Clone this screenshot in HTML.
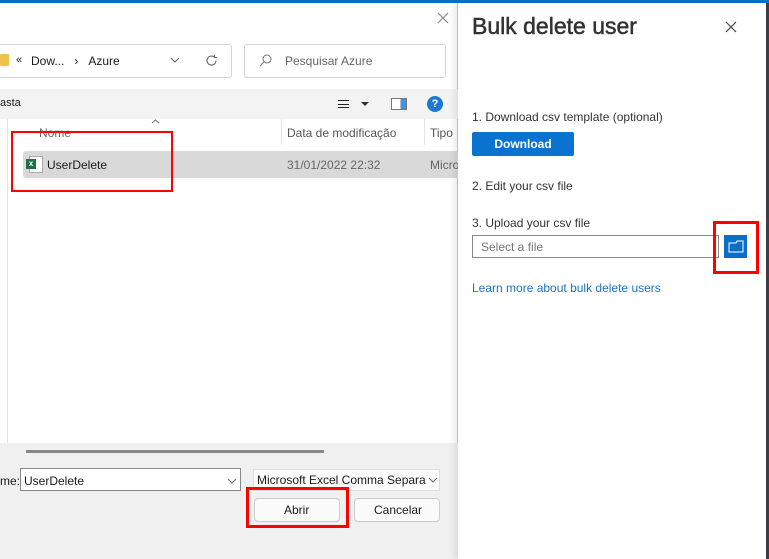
<!DOCTYPE html>
<html><head><style>
*{margin:0;padding:0;box-sizing:border-box}
body{width:769px;height:559px;position:relative;overflow:hidden;background:#f0f0f0;font-family:"Liberation Sans",sans-serif;}
.a{position:absolute}
.t{font-size:12px;color:#1a1a1a;white-space:nowrap}
</style></head><body>
<div class="a" style="left:0;top:0;width:769px;height:3px;background:#0a6fc8"></div>
<div class="a" style="left:0;top:3px;width:458px;height:532px;background:#fff;border-right:1px solid #c8c8c8;border-bottom:1px solid #c8c8c8;border-radius:0 0 6px 0"></div>
<svg class="a" style="left:437px;top:12px" width="12" height="12"><path d="M1 1L11 11M11 1L1 11" stroke="#888" stroke-width="1.2"/></svg>
<div class="a" style="left:-2px;top:44px;width:234px;height:34px;border:1px solid #d5d5d5;border-radius:3px"></div>
<div class="a" style="left:0;top:54px;width:9px;height:12px;background:#f2c14b;border-radius:1px"></div>
<div class="a t" style="left:16px;top:54px;font-size:11px">«</div>
<div class="a t" style="left:31px;top:54px">Dow...&nbsp;&nbsp;&nbsp;›&nbsp;&nbsp;&nbsp;Azure</div>
<svg class="a" style="left:170px;top:57px" width="10" height="6"><path d="M1 1L5 5L9 1" stroke="#666" fill="none"/></svg>
<svg class="a" style="left:205px;top:54px" width="13" height="13"><path d="M11 6.5A4.5 4.5 0 1 1 9.5 3.2M9.5 0.8V3.5H12" stroke="#666" fill="none" stroke-width="1.1"/></svg>
<div class="a" style="left:244px;top:44px;width:202px;height:34px;border:1px solid #d5d5d5;border-radius:3px"></div>
<svg class="a" style="left:259px;top:54px" width="13" height="13"><circle cx="8" cy="5" r="4" stroke="#777" fill="none"/><path d="M5 8L1 12" stroke="#777"/></svg>
<div class="a t" style="left:285px;top:54px;color:#666">Pesquisar Azure</div>
<div class="a" style="left:0;top:89px;width:458px;height:30px;background:#f3f3f3"></div>
<div class="a t" style="left:0;top:97px;font-size:11px">asta</div>
<div class="a" style="left:338px;top:100px;width:11px;height:8px;border-top:1px solid #222;border-bottom:1px solid #222"></div>
<div class="a" style="left:338px;top:103.5px;width:11px;height:1px;background:#222"></div>
<div class="a" style="left:361px;top:102px;border-left:4px solid transparent;border-right:4px solid transparent;border-top:4px solid #333"></div>
<div class="a" style="left:391px;top:98px;width:16px;height:12px;border:1px solid #777;background:linear-gradient(90deg,#fff 60%,#4a90d8 60%)"></div>
<div class="a" style="left:427px;top:96px;width:16px;height:16px;border-radius:50%;background:#1c7ad6;color:#fff;font-size:11px;font-weight:bold;text-align:center;line-height:16px">?</div>
<div class="a" style="left:7px;top:119px;width:1px;height:340px;background:#e4e4e4"></div>
<div class="a t" style="left:39px;top:126px;color:#666">Nome</div>
<svg class="a" style="left:151px;top:119px" width="9" height="5"><path d="M1 4L4.5 1L8 4" stroke="#666" fill="none"/></svg>
<div class="a" style="left:281px;top:119px;width:1px;height:26px;background:#e5e5e5"></div>
<div class="a" style="left:424px;top:119px;width:1px;height:26px;background:#e5e5e5"></div>
<div class="a t" style="left:287px;top:126px;color:#555">Data de modificação</div>
<div class="a t" style="left:430px;top:126px;color:#555">Tipo</div>
<div class="a" style="left:23px;top:151px;width:435px;height:27px;background:#d9d9d9;border-radius:3px 0 0 3px"></div>
<div class="a" style="left:29px;top:156px;width:14px;height:17px;border:1px solid #aaa;background:#fff"></div>
<div class="a" style="left:26px;top:159px;width:10px;height:10px;background:#1e7145;color:#fff;font-size:8px;font-weight:bold;text-align:center;line-height:10px">x</div>
<div class="a t" style="left:47px;top:158px">UserDelete</div>
<div class="a t" style="left:287px;top:158px;color:#666">31/01/2022 22:32</div>
<div class="a t" style="left:430px;top:158px;color:#666">Micro</div>
<div class="a" style="left:0;top:443px;width:458px;height:92px;background:#f0f0f0;border-radius:0 0 6px 0"></div>
<div class="a" style="left:26px;top:450px;width:298px;height:3px;background:#888"></div>
<div class="a t" style="left:0;top:474px">me:</div>
<div class="a" style="left:20px;top:468px;width:221px;height:23px;border:1px solid #888;background:#fff"></div>
<div class="a t" style="left:24px;top:474px">UserDelete</div>
<svg class="a" style="left:227px;top:478px" width="10" height="6"><path d="M1 1L5 5L9 1" stroke="#666" fill="none"/></svg>
<div class="a" style="left:253px;top:469px;width:187px;height:22px;border:1px solid #ddd;background:#fbfbfb"></div>
<div class="a t" style="left:257px;top:473px">Microsoft Excel Comma Separa</div>
<svg class="a" style="left:428px;top:477px" width="10" height="6"><path d="M1 1L5 5L9 1" stroke="#666" fill="none"/></svg>
<div class="a" style="left:254px;top:498px;width:86px;height:24px;border:1px solid #ccc;border-radius:4px;background:#fbfbfb"></div>
<div class="a t" style="left:284px;top:503px">Abrir</div>
<div class="a" style="left:354px;top:498px;width:86px;height:24px;border:1px solid #ccc;border-radius:4px;background:#fbfbfb"></div>
<div class="a t" style="left:374px;top:503px">Cancelar</div>
<div class="a" style="left:11px;top:131px;width:162px;height:61px;border:2px solid #f00"></div>
<div class="a" style="left:246px;top:487px;width:103px;height:41px;border:3px solid #f00"></div>
<div class="a" style="left:458px;top:3px;width:308px;height:556px;background:#fff;box-shadow:-4px 0 6px rgba(0,0,0,.08)"></div>
<div class="a" style="left:766px;top:3px;width:3px;height:556px;background:#3b3f45"></div>
<div class="a" style="left:472px;top:13px;font-size:23px;color:#323232;white-space:nowrap;-webkit-text-stroke:0.5px #323232">Bulk delete user</div>
<svg class="a" style="left:725px;top:21px" width="12" height="12"><path d="M1 1L11 11M11 1L1 11" stroke="#444" stroke-width="1.2"/></svg>
<div class="a t" style="left:472px;top:110px;color:#333">1. Download csv template (optional)</div>
<div class="a" style="left:472px;top:132px;width:102px;height:24px;background:#0a73d0;border-radius:2px;color:#fff;font-weight:bold;font-size:12px;text-align:center;line-height:24px">Download</div>
<div class="a t" style="left:472px;top:179px;color:#333">2. Edit your csv file</div>
<div class="a t" style="left:472px;top:216px;color:#333">3. Upload your csv file</div>
<div class="a" style="left:472px;top:235px;width:247px;height:23px;border:1px solid #888"></div>
<div class="a t" style="left:481px;top:240px;color:#777">Select a file</div>
<div class="a" style="left:724px;top:235px;width:23px;height:23px;background:#0a6fc8"></div>
<svg class="a" style="left:728px;top:240px" width="16" height="13"><path d="M1 3H8L9 1H15V12H1Z" stroke="#fff" fill="none"/></svg>
<div class="a" style="left:713px;top:221px;width:46px;height:53px;border:3px solid #f00"></div>
<div class="a t" style="left:472px;top:281px;color:#1a73c8">Learn more about bulk delete users</div>
</body></html>
